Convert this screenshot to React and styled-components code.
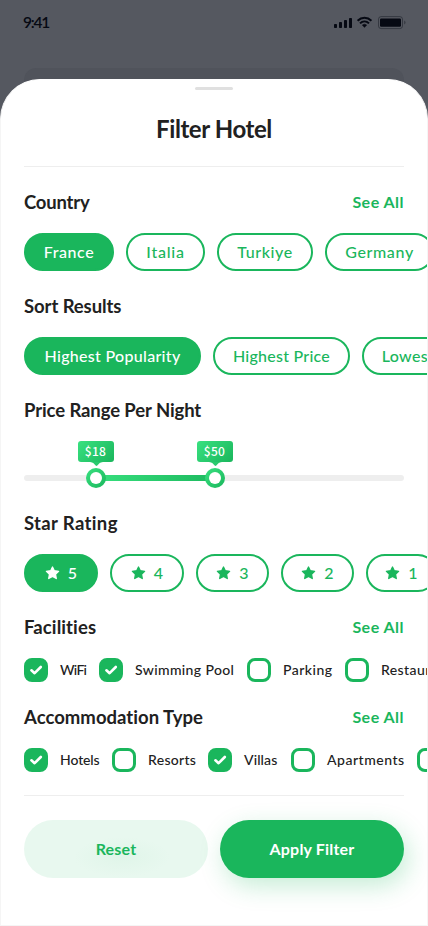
import React from 'react';
import styled, { createGlobalStyle, css } from 'styled-components';

const GREEN = '#1ab65c';
const INK = '#212121';
const GRADIENT = 'linear-gradient(135deg, #39e180 0%, #1ab65c 100%)';

const GlobalStyle = createGlobalStyle`
  *, *::before, *::after { box-sizing: border-box; }
  html, body { margin: 0; padding: 0; overflow: hidden; }
  body {
    font-family: Lato, 'Open Sans', sans-serif;
    font-variant-ligatures: none;
    color: ${INK};
    background: #555860;
  }
  button { font: inherit; border: 0; padding: 0; margin: 0; }
`;

const Screen = styled.div`
  width: 428px;
  height: 926px;
  display: flex;
  flex-direction: column;
  overflow: hidden;
  background: #555860;
`;

const StatusBar = styled.header`
  height: 44px;
  flex: none;
  display: flex;
  align-items: center;
  justify-content: space-between;
  padding: 0 22px 0 23px;
  color: #060913;
`;

const Clock = styled.time`
  font-size: 15.5px;
  line-height: 20px;
  font-weight: 600;
  letter-spacing: -1.2px;
`;

const StatusIcons = styled.svg`
  display: block;
  width: 72px;
  height: 16px;
`;

const BackgroundCard = styled.div`
  flex: none;
  height: 40px;
  margin: 24px 24px -29px;
  border-radius: 12px;
  background: #50535b;
`;

const Sheet = styled.main`
  position: relative;
  flex: 1;
  min-height: 0;
  display: flex;
  flex-direction: column;
  padding: 0 23px;
  overflow: hidden;
  background: #fff;
  border: 1px solid #f5f5f5;
  border-top-color: #fff;
  border-radius: 40px 40px 0 0;
`;

const Handle = styled.div`
  flex: none;
  align-self: center;
  width: 38px;
  height: 3px;
  margin-top: 7px;
  border-radius: 3px;
  background: #e0e0e0;
`;

const Title = styled.h1`
  flex: none;
  margin: 24px 0 0;
  height: 30px;
  font-size: 24px;
  line-height: 30px;
  font-weight: 700;
  letter-spacing: -0.42px;
  text-align: center;
`;

const Divider = styled.hr`
  flex: none;
  width: 100%;
  height: 1px;
  margin: ${(p) => p.$top}px 0 0;
  border: 0;
  background: #eee;
`;

const Section = styled.section`
  flex: none;
  margin-top: 23px;
`;

const SectionHead = styled.div`
  display: flex;
  align-items: center;
  justify-content: space-between;
  height: 24px;
`;

const SectionTitle = styled.h2`
  margin: 0;
  font-size: 18.5px;
  line-height: 24px;
  font-weight: 700;
  white-space: nowrap;
  letter-spacing: ${(p) => p.$track}px;
`;

const SeeAll = styled.button`
  background: none;
  color: ${GREEN};
  font-size: 16px;
  line-height: 22px;
  font-weight: 700;
  letter-spacing: 0.48px;
`;

const Strip = styled.div`
  display: flex;
  gap: 12px;
  width: 403px;
  margin-top: 19px;
  overflow: hidden;
`;

const Pill = styled.button`
  flex: none;
  display: flex;
  align-items: center;
  justify-content: center;
  gap: 9px;
  width: ${(p) => p.$width}px;
  height: 38px;
  border: 2px solid ${GREEN};
  border-radius: 19px;
  font-size: 16px;
  line-height: 22px;
  font-weight: 500;
  white-space: nowrap;
  letter-spacing: ${(p) => p.$track || 0}px;
  ${(p) => p.$active
    ? css`background: ${GREEN}; color: #fff;`
    : css`background: #fff; color: ${GREEN};`}
`;

const StarIcon = styled.svg`
  width: 15px;
  height: 14px;
  margin-right: -1px;
  fill: currentColor;
  stroke: currentColor;
`;

const Slider = styled.div`
  display: grid;
  grid-template-columns: 62px 20px 99px 20px 179px;
  align-items: center;
  height: 20px;
  margin-top: 46px;
`;

const Track = styled.div`
  height: 6px;
  background: ${(p) => (p.$filled ? 'linear-gradient(90deg, #35dc7b, #1fbc61)' : '#eee')};
  margin: 0 ${(p) => (p.$side === 'left' ? -2 : 0)}px 0 ${(p) => (p.$side === 'right' ? -2 : 0)}px;
  border-radius: ${(p) => (p.$side === 'left' ? '3px 0 0 3px' : p.$side === 'right' ? '0 3px 3px 0' : 0)};
  ${(p) => p.$filled && css`margin: 0 -2px;`}
`;

const Knob = styled.div`
  position: relative;
  z-index: 1;
  display: flex;
  align-items: center;
  justify-content: center;
  width: 20px;
  height: 20px;
  border-radius: 50%;
  background: ${GRADIENT};
  &::before {
    content: '';
    width: 12px;
    height: 12px;
    border-radius: 50%;
    background: #fff;
  }
`;

const PriceTag = styled.div`
  position: absolute;
  left: -8px;
  bottom: 26px;
  width: 36px;
  height: 21px;
  padding-right: 1px;
  border-radius: 3px;
  background: ${GRADIENT};
  color: #fff;
  font-family: 'Noto Sans CJK SC', 'Noto Sans', sans-serif;
  font-size: 12px;
  line-height: 20px;
  font-weight: 500;
  letter-spacing: 0.3px;
  text-align: center;
`;

const TagPointer = styled.svg`
  position: absolute;
  left: 12px;
  top: 21px;
  width: 13px;
  height: 5px;
  fill: #2acb6e;
`;

const CheckStrip = styled.div`
  display: flex;
  width: 403px;
  margin-top: 19px;
  overflow: hidden;
`;

const CheckItem = styled.div`
  flex: none;
  display: flex;
  align-items: center;
  gap: 12px;
  width: ${(p) => p.$width}px;
  height: 24px;
`;

const CheckBox = styled.span`
  flex: none;
  display: flex;
  align-items: center;
  justify-content: center;
  width: 24px;
  height: 24px;
  border: 3px solid ${GREEN};
  border-radius: 8px;
  background: ${(p) => (p.$checked ? GREEN : '#fff')};
`;

const CheckMark = styled.svg`
  flex: none;
  width: 14px;
  height: 12px;
  fill: none;
  stroke: #fff;
`;

const CheckLabel = styled.span`
  font-size: 14px;
  line-height: 20px;
  font-weight: 500;
  white-space: nowrap;
  letter-spacing: ${(p) => p.$track || 0}px;
`;

const Actions = styled.footer`
  flex: none;
  display: grid;
  grid-template-columns: 1fr 1fr;
  gap: 12px;
  margin-top: 24px;
`;

const ActionButton = styled.button`
  height: 58px;
  border-radius: 29px;
  font-size: 16px;
  line-height: 22px;
  font-weight: 700;
  letter-spacing: 0.18px;
  ${(p) => p.$primary
    ? css`
        background: ${GREEN};
        color: #fff;
        box-shadow: 4px 8px 24px rgba(26, 182, 92, 0.25);
      `
    : css`
        background: radial-gradient(ellipse 48px 20px at 98px 37px, #e0f5e9, #e8f8ef);
        color: ${GREEN};
      `}
`;

const countries = [
  { label: 'France', width: 90, track: 0.56, active: true },
  { label: 'Italia', width: 79, track: 0.75 },
  { label: 'Turkiye', width: 96, track: 0.58 },
  { label: 'Germany', width: 109, track: 0.64 },
];

const sorts = [
  { label: 'Highest Popularity', width: 177, track: 0.3, active: true },
  { label: 'Highest Price', width: 137, track: 0.25 },
  { label: 'Lowest Price', width: 133, track: 0.3 },
];

const stars = [
  { value: 5, width: 74, active: true },
  { value: 4, width: 74 },
  { value: 3, width: 73 },
  { value: 2, width: 73 },
  { value: 1, width: 71 },
];

const facilities = [
  { label: 'WiFi', width: 75, track: -0.7, checked: true },
  { label: 'Swimming Pool', width: 148, track: 0.37, checked: true },
  { label: 'Parking', width: 98, track: 0.48 },
  { label: 'Restaurant', width: 130, track: 0.4 },
];

const types = [
  { label: 'Hotels', width: 88, track: -0.1, checked: true },
  { label: 'Resorts', width: 96, track: 0.3 },
  { label: 'Villas', width: 83, track: 0.1, checked: true },
  { label: 'Apartments', width: 126, track: 0.52 },
  { width: 24 },
];

function Pills({ items }) {
  return (
    <Strip>
      {items.map((item) => (
        <Pill key={item.label} $width={item.width} $track={item.track} $active={item.active}>
          {item.label}
        </Pill>
      ))}
    </Strip>
  );
}

function Checks({ items }) {
  return (
    <CheckStrip>
      {items.map((item, i) => (
        <CheckItem key={i} $width={item.width}>
          <CheckBox $checked={item.checked}>
            {item.checked && (
              <CheckMark viewBox="0 0 14 12">
                <path d="M2.4 6.3 5.6 9.2 11.8 3" strokeWidth="2.6" strokeLinecap="round" strokeLinejoin="round" />
              </CheckMark>
            )}
          </CheckBox>
          {item.label && <CheckLabel $track={item.track}>{item.label}</CheckLabel>}
        </CheckItem>
      ))}
    </CheckStrip>
  );
}

function Heading({ title, track, more }) {
  return (
    <SectionHead>
      <SectionTitle $track={track}>{title}</SectionTitle>
      {more && <SeeAll>See All</SeeAll>}
    </SectionHead>
  );
}

function PriceKnob({ price }) {
  return (
    <Knob>
      <PriceTag>
        {price}
        <TagPointer viewBox="0 0 13 5">
          <path d="M0 0H13C9.8 0.4 8.6 2 7.3 3.5Q6.5 4.3 5.7 3.5C4.4 2 3.2 0.4 0 0Z" />
        </TagPointer>
      </PriceTag>
    </Knob>
  );
}

export default function App() {
  return (
    <Screen>
      <GlobalStyle />
      <StatusBar>
        <Clock>9:41</Clock>
        <StatusIcons viewBox="0 0 72 16">
          <g fill="#060913">
            <rect x="0" y="10" width="3" height="4" rx="0.8" />
            <rect x="5" y="8" width="3" height="6" rx="0.8" />
            <rect x="10" y="6" width="3" height="8" rx="0.8" />
            <rect x="15" y="4" width="3" height="10" rx="0.8" />
            <rect x="46" y="4.4" width="21" height="8.4" rx="1.2" />
            <path d="M70.2 6.5v4a2.2 2.2 0 0 0 0-4Z" opacity="0.4" />
            <path d="M28.3 11Q30.5 9.4 32.7 11L30.5 13.4Z" stroke="#060913" strokeWidth="0.5" strokeLinejoin="round" />
          </g>
          <g fill="none" stroke="#060913" strokeWidth="2">
            <path d="M23.6 6.7C27.5 2.9 33.5 2.9 37.4 6.7" />
            <path d="M26 9.4C28.6 6.8 32.4 6.8 35 9.4" />
          </g>
          <rect x="44.5" y="2.6" width="24" height="12" rx="2.6" fill="none" stroke="#060913" opacity="0.4" />
        </StatusIcons>
      </StatusBar>
      <BackgroundCard />
      <Sheet>
        <Handle />
        <Title>Filter Hotel</Title>
        <Divider $top={22} />

        <Section>
          <Heading title="Country" track={-0.2} more />
          <Pills items={countries} />
        </Section>

        <Section>
          <Heading title="Sort Results" track={-0.08} />
          <Pills items={sorts} />
        </Section>

        <Section>
          <Heading title="Price Range Per Night" track={-0.1} />
          <Slider>
            <Track $side="left" />
            <PriceKnob price="$18" />
            <Track $filled />
            <PriceKnob price="$50" />
            <Track $side="right" />
          </Slider>
        </Section>

        <Section>
          <Heading title="Star Rating" track={0.36} />
          <Strip>
            {stars.map((s) => (
              <Pill key={s.value} $width={s.width} $active={s.active}>
                <StarIcon viewBox="0 0 15 14">
                  <path
                    d="M7.5 1 9.3 4.7 13.6 5.3 10.5 8.2 11.3 12.5 7.5 10.5 3.7 12.5 4.5 8.2 1.4 5.3 5.7 4.7Z"
                    strokeWidth="1.3"
                    strokeLinejoin="round"
                  />
                </StarIcon>
                {s.value}
              </Pill>
            ))}
          </Strip>
        </Section>

        <Section>
          <Heading title="Facilities" track={0.1} more />
          <Checks items={facilities} />
        </Section>

        <Section>
          <Heading title="Accommodation Type" track={0.03} more />
          <Checks items={types} />
        </Section>

        <Divider $top={23} />
        <Actions>
          <ActionButton>Reset</ActionButton>
          <ActionButton $primary>Apply Filter</ActionButton>
        </Actions>
      </Sheet>
    </Screen>
  );
}
